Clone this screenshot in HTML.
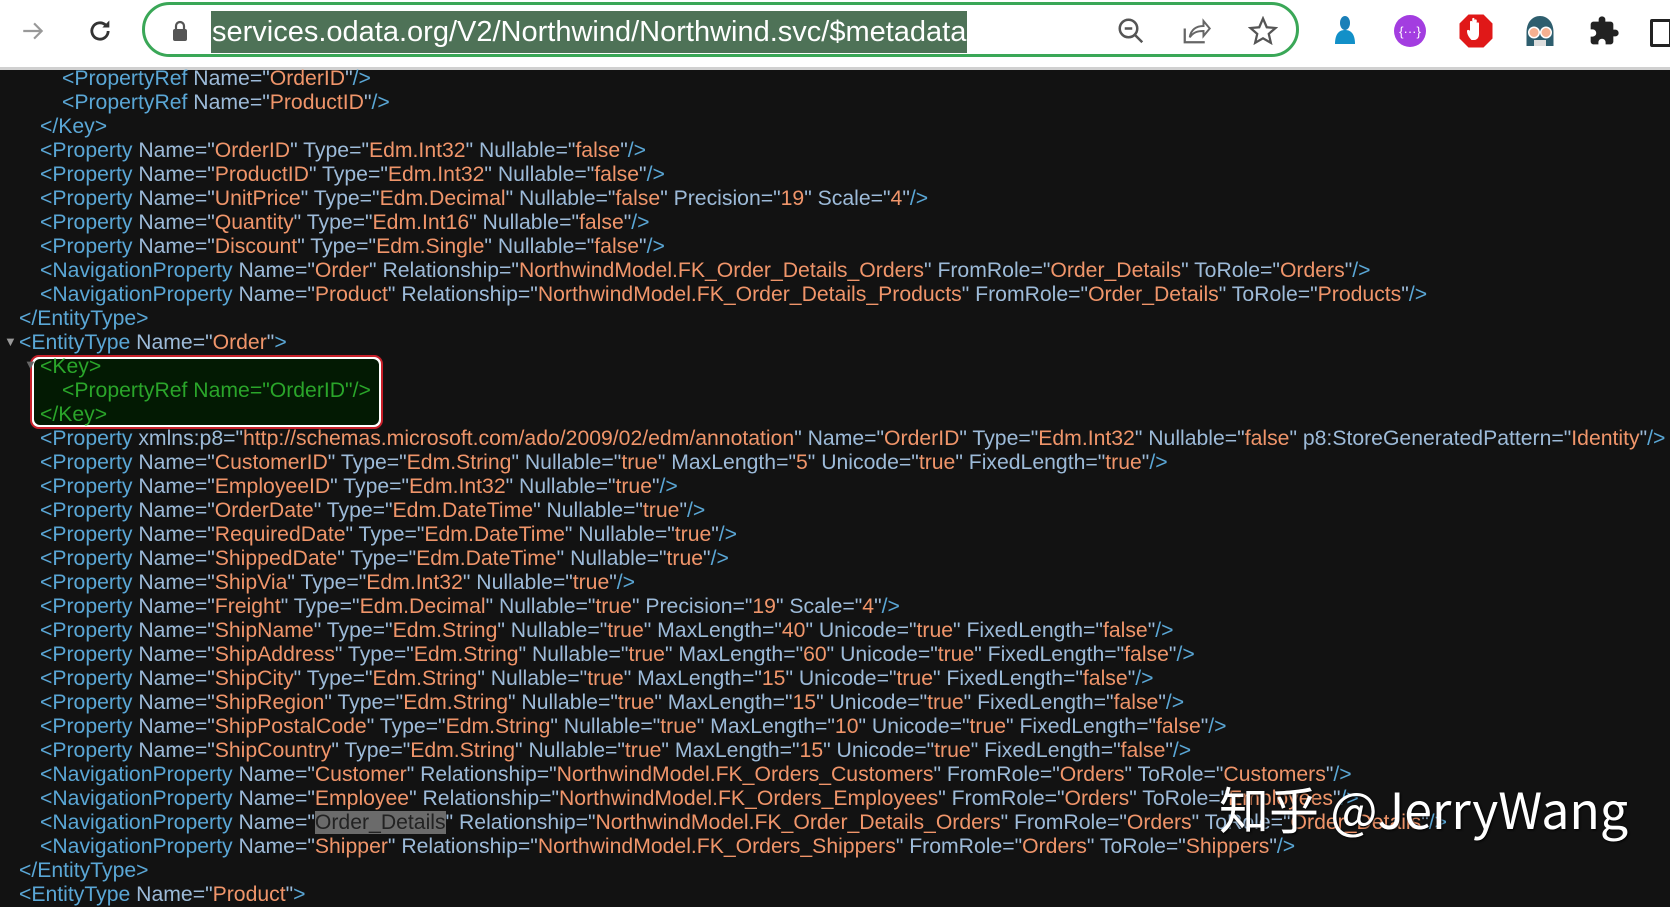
<!DOCTYPE html>
<html><head><meta charset="utf-8"><style>
*{margin:0;padding:0;box-sizing:border-box}
body{width:1670px;height:888px;overflow:hidden;background:#121212;font-family:"Liberation Sans",Arial,sans-serif;position:relative}
#bar{position:absolute;left:0;top:0;width:1670px;height:70px;background:#fff;border-bottom:3px solid #d0d0d0}
#url{position:absolute;left:142px;top:2px;width:1157px;height:55px;border:3px solid #3aa757;border-radius:28px}
#sel{position:absolute;left:211px;top:11px;height:42px;background:#4e7257;color:#fff;font-size:29px;line-height:42px;padding:0 1px;letter-spacing:0px;white-space:nowrap}
.ic{position:absolute}
#code{position:absolute;left:0;top:67px;width:1670px;font-size:21.2px;color:#9dbbd9;white-space:nowrap;line-height:24px}
.l{height:24px;white-space:nowrap}
.i0{padding-left:19px}.i1{padding-left:40px}.i2{padding-left:62px}
t{color:#5aa7d6}
v{color:#f0956a}
#hl{position:absolute;left:30px;top:355px;width:353px;height:74px;border:2px solid #c8202a;border-radius:9px;background:#fff;padding:2px}
#hl div{width:100%;height:100%;background:#031a03;border-radius:6px}
#hltext{position:absolute;left:0;top:355px;font-size:21.2px;line-height:24px;color:#2aa52a;white-space:nowrap}
#wm{position:absolute;left:1219px;top:776px;color:#fff;font-family:"Noto Sans CJK SC","Liberation Sans",sans-serif;font-size:50px;line-height:64px;white-space:nowrap;text-shadow:1px 1px 2px #000}
.tri{position:absolute;color:#999;font-size:13px}
</style></head><body>
<div id="bar">
 <svg class="ic" style="left:20px;top:18px" width="26" height="26" viewBox="0 0 24 24"><path d="M3 12h17M13 5l7 7-7 7" stroke="#999" stroke-width="2" fill="none"/></svg>
 <svg class="ic" style="left:86px;top:17px" width="28" height="28" viewBox="0 0 24 24"><path d="M19 12a7 7 0 1 1-2.1-5" stroke="#333" stroke-width="2.4" fill="none"/><path d="M20 3v6h-6z" fill="#333"/></svg>
 <div id="url"></div>
 <svg class="ic" style="left:171px;top:20px" width="18" height="22" viewBox="0 0 18 22"><path d="M5 9V6a4 4 0 0 1 8 0v3" stroke="#555" stroke-width="2.2" fill="none"/><rect x="2" y="9" width="14" height="12" rx="2" fill="#555"/></svg>
 <div id="sel">services.odata.org/V2/Northwind/Northwind.svc/$metadata</div>
 <svg class="ic" style="left:1116px;top:16px" width="30" height="30" viewBox="0 0 24 24"><circle cx="10" cy="10" r="7" stroke="#555" stroke-width="2" fill="none"/><path d="M7 10h6M15 15l6 6" stroke="#555" stroke-width="2"/></svg>
 <svg class="ic" style="left:1181px;top:16px" width="30" height="30" viewBox="0 0 24 24"><path d="M3 10v11h16" stroke="#666" stroke-width="1.8" fill="none"/><path d="M7 17c1-6 5-9 11-9V4l5 6-5 6v-4c-5 0-8 1-11 5z" stroke="#666" stroke-width="1.6" fill="none"/></svg>
 <svg class="ic" style="left:1248px;top:16px" width="30" height="30" viewBox="0 0 24 24"><path d="M12 2l3 7 7 .6-5.4 4.7 1.7 7.2L12 17.8 5.7 21.5l1.7-7.2L2 9.6 9 9z" stroke="#555" stroke-width="1.8" fill="none"/></svg>
 <svg class="ic" style="left:1331px;top:14px" width="28" height="34" viewBox="0 0 28 34"><ellipse cx="14" cy="9" rx="5" ry="7" fill="#1a7fb8"/><path d="M4 30c0-10 4-14 10-14s10 4 10 14z" fill="#1290c8"/></svg>
 <svg class="ic" style="left:1393px;top:14px" width="34" height="34"><circle cx="17" cy="17" r="16" fill="#a33de0"/><text x="17" y="22" font-size="13" fill="#fff" text-anchor="middle" font-family="Liberation Sans">{···}</text></svg>
 <svg class="ic" style="left:1458px;top:12px" width="36" height="38" viewBox="0 0 24 24"><path d="M7 1h10l6 6v10l-6 6H7l-6-6V7z" fill="#e01818"/><path d="M9 18c-2-2-3-4-3-6 0-1 1.5-1 2 0V6c0-1 1.5-1 1.5 0v4-6c0-1 1.5-1 1.5 0v6-5c0-1 1.5-1 1.5 0v5-3c0-1 1.5-1 1.5 0v7c0 3-2 4-3 4z" fill="#fff"/></svg>
 <svg class="ic" style="left:1522px;top:13px" width="36" height="36" viewBox="0 0 24 24"><path d="M3 13C3 6 7 2 12 2s9 4 9 11v9H3z" fill="#2e5e6e"/><circle cx="8" cy="13" r="3.5" fill="#f5b090" stroke="#fff"/><circle cx="16" cy="13" r="3.5" fill="#f5b090" stroke="#fff"/><rect x="8" y="18" width="8" height="4" fill="#ddd"/></svg>
 <svg class="ic" style="left:1588px;top:15px" width="32" height="32" viewBox="0 0 24 24"><path d="M20.5 11H19V7a2 2 0 0 0-2-2h-4V3.5a2.5 2.5 0 0 0-5 0V5H4a2 2 0 0 0-2 2v3.8h1.5a2.7 2.7 0 0 1 0 5.4H2V20a2 2 0 0 0 2 2h3.8v-1.5a2.7 2.7 0 0 1 5.4 0V22H17a2 2 0 0 0 2-2v-4h1.5a2.5 2.5 0 0 0 0-5z" fill="#222"/></svg>
 <div class="ic" style="left:1650px;top:19px;width:22px;height:28px;border:3px solid #222;border-radius:2px"></div>
</div>
<div id="hl"><div></div></div>
<span class="tri" style="left:4px;top:334px">▼</span>
<span class="tri" style="left:24px;top:357px;color:#666">▼</span>
<div id="code"><div class="l i2"><t>&lt;PropertyRef</t> Name="<v>OrderID</v>"<t>/&gt;</t></div><div class="l i2"><t>&lt;PropertyRef</t> Name="<v>ProductID</v>"<t>/&gt;</t></div><div class="l i1"><t>&lt;/Key&gt;</t></div><div class="l i1"><t>&lt;Property</t> Name="<v>OrderID</v>" Type="<v>Edm.Int32</v>" Nullable="<v>false</v>"<t>/&gt;</t></div><div class="l i1"><t>&lt;Property</t> Name="<v>ProductID</v>" Type="<v>Edm.Int32</v>" Nullable="<v>false</v>"<t>/&gt;</t></div><div class="l i1"><t>&lt;Property</t> Name="<v>UnitPrice</v>" Type="<v>Edm.Decimal</v>" Nullable="<v>false</v>" Precision="<v>19</v>" Scale="<v>4</v>"<t>/&gt;</t></div><div class="l i1"><t>&lt;Property</t> Name="<v>Quantity</v>" Type="<v>Edm.Int16</v>" Nullable="<v>false</v>"<t>/&gt;</t></div><div class="l i1"><t>&lt;Property</t> Name="<v>Discount</v>" Type="<v>Edm.Single</v>" Nullable="<v>false</v>"<t>/&gt;</t></div><div class="l i1"><t>&lt;NavigationProperty</t> Name="<v>Order</v>" Relationship="<v>NorthwindModel.FK_Order_Details_Orders</v>" FromRole="<v>Order_Details</v>" ToRole="<v>Orders</v>"<t>/&gt;</t></div><div class="l i1"><t>&lt;NavigationProperty</t> Name="<v>Product</v>" Relationship="<v>NorthwindModel.FK_Order_Details_Products</v>" FromRole="<v>Order_Details</v>" ToRole="<v>Products</v>"<t>/&gt;</t></div><div class="l i0"><t>&lt;/EntityType&gt;</t></div><div class="l i0"><t>&lt;EntityType</t> Name="<v>Order</v>"<t>&gt;</t></div><div class="l"></div><div class="l"></div><div class="l"></div><div class="l i1"><t>&lt;Property</t> xmlns:p8="<v>http://schemas.microsoft.com/ado/2009/02/edm/annotation</v>" Name="<v>OrderID</v>" Type="<v>Edm.Int32</v>" Nullable="<v>false</v>" p8:StoreGeneratedPattern="<v>Identity</v>"<t>/&gt;</t></div><div class="l i1"><t>&lt;Property</t> Name="<v>CustomerID</v>" Type="<v>Edm.String</v>" Nullable="<v>true</v>" MaxLength="<v>5</v>" Unicode="<v>true</v>" FixedLength="<v>true</v>"<t>/&gt;</t></div><div class="l i1"><t>&lt;Property</t> Name="<v>EmployeeID</v>" Type="<v>Edm.Int32</v>" Nullable="<v>true</v>"<t>/&gt;</t></div><div class="l i1"><t>&lt;Property</t> Name="<v>OrderDate</v>" Type="<v>Edm.DateTime</v>" Nullable="<v>true</v>"<t>/&gt;</t></div><div class="l i1"><t>&lt;Property</t> Name="<v>RequiredDate</v>" Type="<v>Edm.DateTime</v>" Nullable="<v>true</v>"<t>/&gt;</t></div><div class="l i1"><t>&lt;Property</t> Name="<v>ShippedDate</v>" Type="<v>Edm.DateTime</v>" Nullable="<v>true</v>"<t>/&gt;</t></div><div class="l i1"><t>&lt;Property</t> Name="<v>ShipVia</v>" Type="<v>Edm.Int32</v>" Nullable="<v>true</v>"<t>/&gt;</t></div><div class="l i1"><t>&lt;Property</t> Name="<v>Freight</v>" Type="<v>Edm.Decimal</v>" Nullable="<v>true</v>" Precision="<v>19</v>" Scale="<v>4</v>"<t>/&gt;</t></div><div class="l i1"><t>&lt;Property</t> Name="<v>ShipName</v>" Type="<v>Edm.String</v>" Nullable="<v>true</v>" MaxLength="<v>40</v>" Unicode="<v>true</v>" FixedLength="<v>false</v>"<t>/&gt;</t></div><div class="l i1"><t>&lt;Property</t> Name="<v>ShipAddress</v>" Type="<v>Edm.String</v>" Nullable="<v>true</v>" MaxLength="<v>60</v>" Unicode="<v>true</v>" FixedLength="<v>false</v>"<t>/&gt;</t></div><div class="l i1"><t>&lt;Property</t> Name="<v>ShipCity</v>" Type="<v>Edm.String</v>" Nullable="<v>true</v>" MaxLength="<v>15</v>" Unicode="<v>true</v>" FixedLength="<v>false</v>"<t>/&gt;</t></div><div class="l i1"><t>&lt;Property</t> Name="<v>ShipRegion</v>" Type="<v>Edm.String</v>" Nullable="<v>true</v>" MaxLength="<v>15</v>" Unicode="<v>true</v>" FixedLength="<v>false</v>"<t>/&gt;</t></div><div class="l i1"><t>&lt;Property</t> Name="<v>ShipPostalCode</v>" Type="<v>Edm.String</v>" Nullable="<v>true</v>" MaxLength="<v>10</v>" Unicode="<v>true</v>" FixedLength="<v>false</v>"<t>/&gt;</t></div><div class="l i1"><t>&lt;Property</t> Name="<v>ShipCountry</v>" Type="<v>Edm.String</v>" Nullable="<v>true</v>" MaxLength="<v>15</v>" Unicode="<v>true</v>" FixedLength="<v>false</v>"<t>/&gt;</t></div><div class="l i1"><t>&lt;NavigationProperty</t> Name="<v>Customer</v>" Relationship="<v>NorthwindModel.FK_Orders_Customers</v>" FromRole="<v>Orders</v>" ToRole="<v>Customers</v>"<t>/&gt;</t></div><div class="l i1"><t>&lt;NavigationProperty</t> Name="<v>Employee</v>" Relationship="<v>NorthwindModel.FK_Orders_Employees</v>" FromRole="<v>Orders</v>" ToRole="<v>Employees</v>"<t>/&gt;</t></div><div class="l i1"><t>&lt;NavigationProperty</t> Name="<span style="background:#6b6b6b;color:#222">Order_Details</span>" Relationship="<v>NorthwindModel.FK_Order_Details_Orders</v>" FromRole="<v>Orders</v>" ToRole="<v>Order_Details</v>"<t>/&gt;</t></div><div class="l i1"><t>&lt;NavigationProperty</t> Name="<v>Shipper</v>" Relationship="<v>NorthwindModel.FK_Orders_Shippers</v>" FromRole="<v>Orders</v>" ToRole="<v>Shippers</v>"<t>/&gt;</t></div><div class="l i0"><t>&lt;/EntityType&gt;</t></div><div class="l i0"><t>&lt;EntityType</t> Name="<v>Product</v>"<t>&gt;</t></div></div>
<div id="hltext"><div class="l i1">&lt;Key&gt;</div><div class="l i2">&lt;PropertyRef Name="OrderID"/&gt;</div><div class="l i1">&lt;/Key&gt;</div></div>
<div id="wm">知乎 @JerryWang</div>
</body></html>
